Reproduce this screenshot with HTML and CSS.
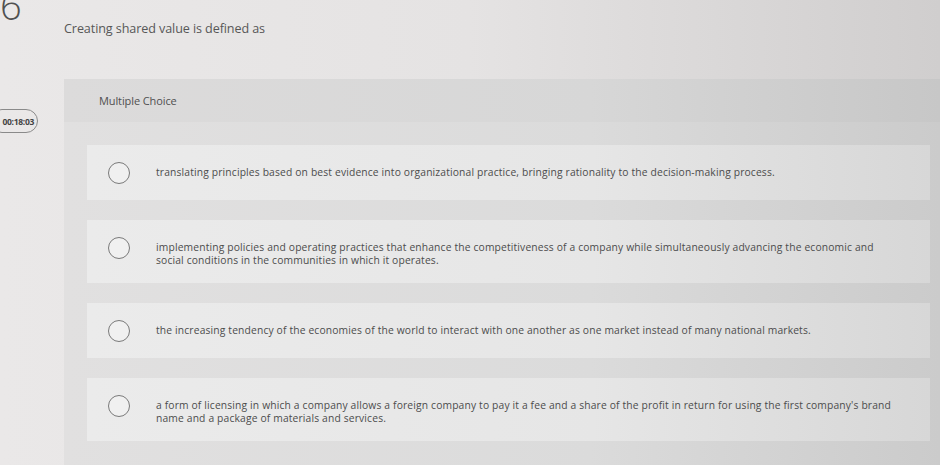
FILE: index.html
```html
<!DOCTYPE html>
<html>
<head>
<meta charset="utf-8">
<link rel="stylesheet" href="styles.css">
</head>
<body>
<div class="page">
  <aside class="side">
    <div class="qnum">6</div>
    <div class="timer">00:18:03</div>
  </aside>
  <main class="main">
    <p class="question">Creating shared value is defined as</p>
    <section class="panel">
      <div class="panel-head">Multiple Choice</div>
      <div class="options">
        <label class="option"><span class="radio"></span><span class="otext">translating principles based on best evidence into organizational practice, bringing rationality to the decision-making process.</span></label>
        <label class="option"><span class="radio"></span><span class="otext">implementing policies and operating practices that enhance the competitiveness of a company while simultaneously advancing the economic and<br>social conditions in the communities in which it operates.</span></label>
        <label class="option"><span class="radio"></span><span class="otext">the increasing tendency of the economies of the world to interact with one another as one market instead of many national markets.</span></label>
        <label class="option"><span class="radio"></span><span class="otext">a form of licensing in which a company allows a foreign company to pay it a fee and a share of the profit in return for using the first company's brand<br>name and a package of materials and services.</span></label>
      </div>
    </section>
  </main>
</div>
</body>
</html>
```

FILE: styles.css
```css
html, body {
  margin: 0;
  padding: 0;
  height: 100%;
  overflow: hidden;
}
body {
  background: linear-gradient(90deg, #eae8e8 0%, #e5e3e3 50%, #d0cece 100%);
  font-family: "Open Sans", Lato, sans-serif;
  color: #585858;
}
.page {
  display: flex;
  height: 465px;
}
.side {
  width: 64px;
  flex: none;
  display: flex;
  flex-direction: column;
}
.qnum {
  font-family: "Open Sans", sans-serif;
  font-weight: 300;
  font-size: 38px;
  line-height: 38px;
  margin-top: -14px;
  margin-left: 0;
  color: #505050;
}
.timer {
  margin-top: 85px;
  margin-left: -10px;
  width: 48px;
  height: 24px;
  box-sizing: border-box;
  border: 1.5px solid #8a8a8a;
  border-radius: 12px;
  font-size: 8.5px;
  font-weight: 700;
  color: #444;
  display: flex;
  align-items: center;
  justify-content: flex-end;
  padding-right: 3px;
  letter-spacing: -0.3px;
}
.main {
  flex: 1;
  display: flex;
  flex-direction: column;
}
.question {
  margin: 21px 0 0 0;
  font-size: 12.6px;
  line-height: 16px;
  color: #575757;
  letter-spacing: -0.1px;
}
.panel {
  margin-top: 42px;
  flex: 1;
  background: linear-gradient(90deg, #e1e0e0 0%, #dbdbdb 60%, #cbcbcb 100%);
}
.panel-head {
  height: 43px;
  padding-left: 35px;
  display: flex;
  align-items: center;
  font-size: 11px;
  color: #505050;
  letter-spacing: -0.1px;
  background: linear-gradient(90deg, #dcdbdb 0%, #d7d7d7 60%, #c7c7c7 100%);
}
.options {
  display: flex;
  flex-direction: column;
  gap: 20px;
  padding: 23px 10px 0 23px;
}
.option {
  display: flex;
  align-items: flex-start;
  gap: 26px;
  padding: 17px 10px 16px 21px;
  background: linear-gradient(90deg, #ebebeb 0%, #e6e6e6 60%, #d7d7d7 100%);
}
.radio {
  flex: none;
  width: 22px;
  height: 22px;
  box-sizing: border-box;
  border: 1.5px solid #7a7a7a;
  border-radius: 50%;
  background: #f0f0f0;
}
.otext {
  padding-top: 4px;
  font-size: 10.3px;
  line-height: 13px;
  color: #4c4c4c;
  letter-spacing: 0.15px;
  white-space: nowrap;
}
```
